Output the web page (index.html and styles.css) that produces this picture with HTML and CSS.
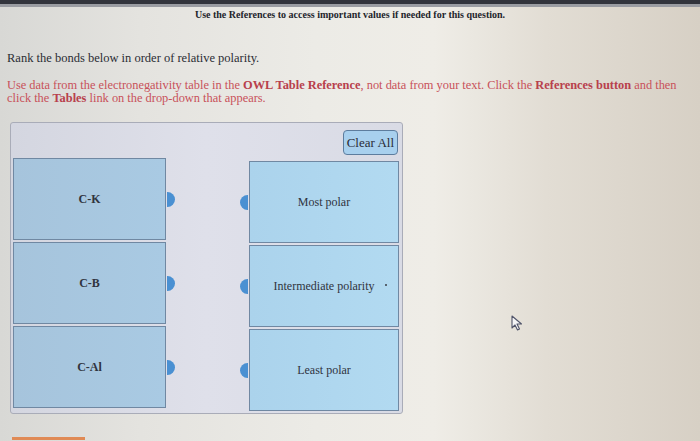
FILE: index.html
```html
<!DOCTYPE html>
<html>
<head>
<meta charset="utf-8">
<link rel="stylesheet" href="styles.css">
</head>
<body>
<div class="page">
  <div class="topbar"></div>
  <div class="header">Use the References to access important values if needed for this question.</div>
  <div class="content">
    <p class="question">Rank the bonds below in order of relative polarity.</p>
    <p class="hint"><span>Use data from the electronegativity table in the <b>OWL Table Reference</b>, not data from your text. Click the <b>References button</b> and then</span><br><span>click the <b>Tables</b> link on the drop-down that appears.</span></p>
  </div>
  <div class="panel">
    <div class="toolbar"><button class="clear">Clear All</button></div>
    <div class="board">
      <div class="col left">
        <div class="tile src"><span>C-K</span><i class="tab tab-r"></i></div>
        <div class="tile src"><span>C-B</span><i class="tab tab-r"></i></div>
        <div class="tile src"><span>C-Al</span><i class="tab tab-r"></i></div>
      </div>
      <div class="col right">
        <div class="tile dst"><i class="tab tab-l"></i><span>Most polar</span></div>
        <div class="tile dst"><i class="tab tab-l"></i><span>Intermediate polarity</span><em class="dot"></em></div>
        <div class="tile dst"><i class="tab tab-l"></i><span>Least polar</span></div>
      </div>
    </div>
  </div>
  <div class="footer-line"></div>
  <svg class="cursor" width="12" height="16" viewBox="0 0 12 16"><path d="M1 1 L1 13 L4 10 L6.5 15 L8.5 14 L6 9 L10.5 9 Z" fill="#f4f4f6" stroke="#50546a" stroke-width="1.1" stroke-linejoin="round"/></svg>
</div>
</body>
</html>
```
FILE: styles.css
```css
html, body {
  margin: 0;
  padding: 0;
}
body {
  width: 700px;
  height: 441px;
  overflow: hidden;
  font-family: "Liberation Serif", "Times New Roman", serif;
  color: #2a2c33;
  background: linear-gradient(to right, #d8d8d5 0%, #e4e3df 20%, #ecebe6 45%, #efede7 62%, #e2ddd4 78%, #d7d0c5 100%);
}
.page {
  position: relative;
  height: 441px;
}
.topbar {
  height: 4px;
  background: #32343c;
  border-bottom: 3px solid #9a9ca2;
}
.header {
  text-align: center;
  font-weight: bold;
  font-size: 10px;
  line-height: 14px;
  padding-top: 1px;
  color: #23252c;
}
.content {
  padding: 0 7px;
}
.question {
  margin: 29px 0 0;
  font-size: 12.5px;
  line-height: 14px;
  color: #2b2d34;
}
.hint {
  margin: 14px 0 0;
  font-size: 12.4px;
  line-height: 13px;
  white-space: nowrap;
  color: #c8515a;
}
.hint b {
  color: #b8404c;
}
.panel {
  margin: 17px 0 0 10px;
  width: 386px;
  padding: 7px 3px 2px 2px;
  border: 1px solid #a9acb8;
  border-radius: 3px;
  background: linear-gradient(to right, #d4d6e0, #dfe0ea 50%, #d9dbe5);
}
.toolbar {
  display: flex;
  justify-content: flex-end;
  padding-right: 1px;
}
.clear {
  font-family: "Liberation Serif", "Times New Roman", serif;
  font-size: 13px;
  color: #2a2c36;
  background: #a8d0ee;
  border: 1px solid #5d7d9e;
  border-radius: 4px;
  height: 25px;
  padding: 0 3px;
}
.board {
  display: flex;
  justify-content: space-between;
  margin-top: 3px;
}
.col {
  display: flex;
  flex-direction: column;
  gap: 2px;
}
.left {
  width: 153px;
}
.right {
  width: 150px;
  margin-top: 3px;
}
.tile {
  position: relative;
  height: 80px;
  border: 1px solid #7088a2;
  display: flex;
  align-items: center;
  justify-content: center;
  font-size: 12px;
}
.src {
  background: linear-gradient(to right, #a6c4dc, #a9cae3);
  font-weight: bold;
  color: #30343e;
}
.dst {
  background: linear-gradient(to right, #abd3ec, #b2daf1);
  color: #30343e;
}
.tab {
  position: absolute;
  top: 33px;
  width: 8px;
  height: 15px;
  background: #4a90d2;
}
.tab-r {
  right: -10px;
  border-radius: 0 8px 8px 0;
}
.tab-l {
  left: -10px;
  border-radius: 8px 0 0 8px;
}
.dot {
  position: absolute;
  right: 11px;
  top: 38px;
  width: 2px;
  height: 2px;
  background: #3a3c44;
  border-radius: 1px;
}
.footer-line {
  margin: 23px 0 0 12px;
  width: 73px;
  height: 3px;
  background: #e08a55;
}
.cursor {
  position: absolute;
  left: 511px;
  top: 315px;
}
```
